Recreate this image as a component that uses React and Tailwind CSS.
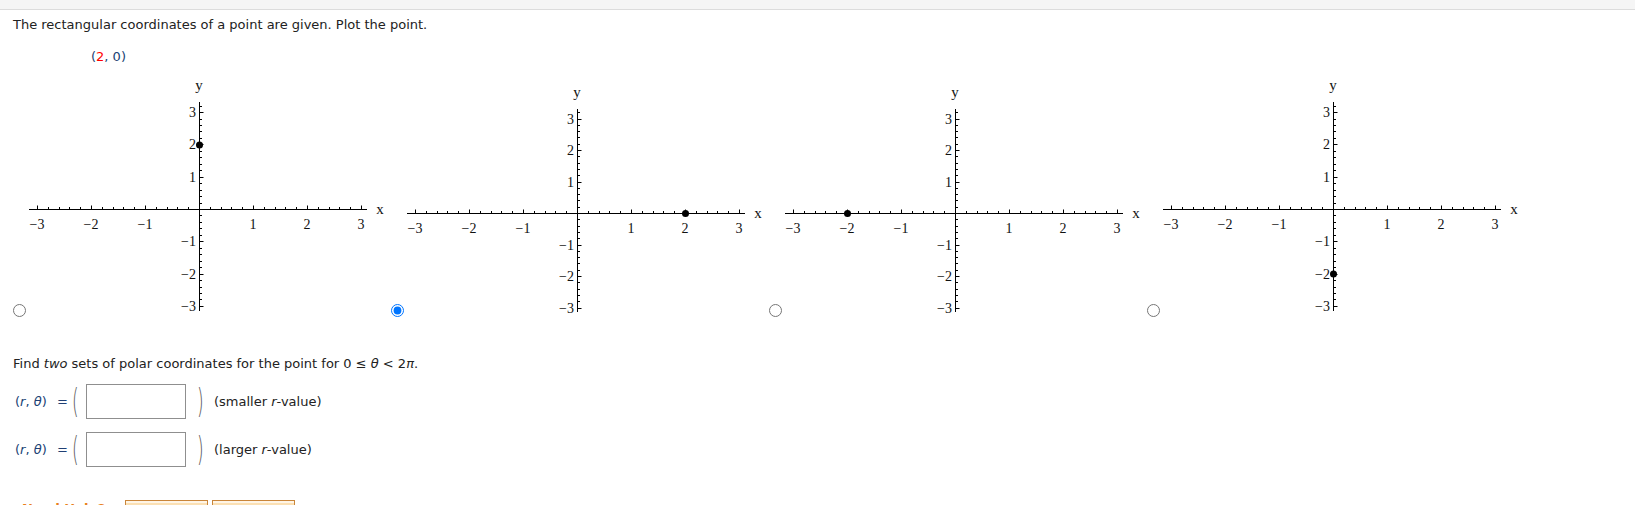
import React from "react";

const NAVY = "#203f74";

function Plot({ pt, axisY, unitY }) {
  const ox = 173;
  const ux = 54;
  const W = 365;
  const H = 240;
  const ticksX = [];
  for (let k = -15; k <= 15; k++) {
    if (k === 0) continue;
    const x = Math.round(ox + (k * ux) / 5) + 0.5;
    const major = k % 5 === 0;
    ticksX.push(
      <line key={"tx" + k} x1={x} x2={x} y1={axisY + 0.5} y2={axisY + 0.5 - (major ? 4 : 2.5)} stroke="#000" strokeWidth="1" />
    );
  }
  const ticksY = [];
  for (let k = -15; k <= 16; k++) {
    if (k === 0) continue;
    const y = Math.round(axisY - (k * unitY) / 5) + 0.5;
    const major = k % 5 === 0;
    ticksY.push(
      <line key={"ty" + k} x1={ox + 0.5} x2={ox + 0.5 + (major ? 4 : 2.5)} y1={y} y2={y} stroke="#000" strokeWidth="1" />
    );
  }
  const top = Math.round(axisY - 3.3 * unitY);
  const bottom = Math.round(axisY + 3.15 * unitY);
  const labelsX = [-3, -2, -1, 1, 2, 3].map((v) => (
    <text key={"lx" + v} x={ox + v * ux} y={axisY + 20} textAnchor="middle">
      {v < 0 ? "\u2212" + -v : v}
    </text>
  ));
  const labelsY = [-3, -2, -1, 1, 2, 3].map((v) => (
    <text key={"ly" + v} x={ox - 3} y={axisY - v * unitY + 5} textAnchor="end">
      {v < 0 ? "\u2212" + -v : v}
    </text>
  ));
  return (
    <svg width={W} height={H} viewBox={`0 0 ${W} ${H}`} className="block shrink-0" style={{ fontFamily: '"Liberation Serif", "DejaVu Serif", serif', fontSize: 14 }} fill="#111">
      <line x1="3" x2="341" y1={axisY + 0.5} y2={axisY + 0.5} stroke="#000" strokeWidth="1" />
      <line x1={ox + 0.5} x2={ox + 0.5} y1={top} y2={bottom} stroke="#000" strokeWidth="1" />
      {ticksX}
      {ticksY}
      {labelsX}
      {labelsY}
      <text x="354" y={axisY + 5} textAnchor="middle" style={{ fontSize: 15 }}>x</text>
      <text x={ox} y={top - 12} textAnchor="middle" style={{ fontSize: 15 }}>y</text>
      <circle cx={ox + 0.5 + pt[0] * ux} cy={axisY + 0.5 - pt[1] * unitY} r="3.5" fill="#000" />
    </svg>
  );
}

function Option({ pt, axisY, unitY, checked }) {
  return (
    <div className="flex w-[378px] shrink-0 items-end">
      <input type="radio" name="plotpt" defaultChecked={checked} className="m-0 h-[13px] w-[13px] shrink-0" />
      <Plot pt={pt} axisY={axisY} unitY={unitY} />
    </div>
  );
}

function Paren({ children }) {
  return (
    <span className="inline-block scale-y-[2] text-[17px] leading-none text-[#555] font-['DejaVu_Sans',sans-serif] font-light">
      {children}
    </span>
  );
}

function AnswerRow({ label, className }) {
  return (
    <div className={"flex h-[35px] items-center " + className}>
      <span className="w-[44px] pl-[2px] text-[#203f74]">
        (<i>r</i>, <i>θ</i>)
      </span>
      <span className="w-[15px] text-[#203f74]">=</span>
      <span className="flex w-[14px] items-center">
        <Paren>(</Paren>
      </span>
      <input type="text" className="h-[35px] w-[100px] border border-[#8f8f8f] bg-white outline-none" />
      <span className="flex w-[28px] items-center pl-[11px]">
        <Paren>)</Paren>
      </span>
      <span className="text-[#222]">{label}</span>
    </div>
  );
}

export default function App() {
  return (
    <div className="min-h-[505px] bg-white font-['DejaVu_Sans','Noto_Sans',sans-serif] text-[13px] leading-[16px] text-[#222]">
      <div className="h-[10px] border-b border-[#dcdcdc] bg-[#f5f5f5]" />
      <div className="px-[13px]">
        <p className="mt-[7px]">The rectangular coordinates of a point are given. Plot the point.</p>
        <p className="ml-[78px] mt-[16px] text-[#203f74]">
          (<span className="text-[#ff0000]">2</span>, 0)
        </p>
        <div className="mt-[12px] flex">
          <Option pt={[0, 2]} axisY={132} unitY={32.3} />
          <Option pt={[2, 0]} axisY={136} unitY={31.5} checked />
          <Option pt={[-2, 0]} axisY={136} unitY={31.5} />
          <Option pt={[0, -2]} axisY={132} unitY={32.3} />
        </div>
        <p className="mt-[39px]">
          Find <i>two</i> sets of polar coordinates for the point for 0 ≤ <i>θ</i> &lt; 2<i>π</i>.
        </p>
        <AnswerRow label={<>(smaller <i>r</i>-value)</>} className="mt-[12px]" />
        <AnswerRow label={<>(larger <i>r</i>-value)</>} className="mt-[13px]" />
        <div className="mt-[33px] flex items-start">
          <span className="ml-[9px] mt-[1px] w-[103px] font-bold text-[#e8801c]">Need Help?</span>
          <button className="h-[22px] w-[83px] border border-[#c9853a] bg-[#fbe0b4] shadow-[inset_0_2px_0_#fff5e6]" />
          <button className="ml-[4px] h-[22px] w-[83px] border border-[#c9853a] bg-[#fbe0b4] shadow-[inset_0_2px_0_#fff5e6]" />
        </div>
      </div>
    </div>
  );
}
